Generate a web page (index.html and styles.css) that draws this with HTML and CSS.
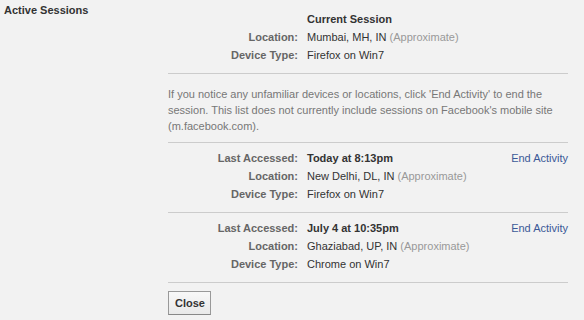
FILE: index.html
```html
<!DOCTYPE html>
<html lang="en">
<head>
  <meta charset="UTF-8" />
  <title>Active Sessions</title>
  <link rel="stylesheet" href="styles.css">
</head>
<body>
  <div class="page">
    <div class="section-title">Active Sessions</div>
    <div class="sessions">
      <div class="block current">
        <div class="row">
          <span class="label"></span>
          <span class="value strong">Current Session</span>
        </div>
        <div class="row">
          <span class="label">Location:</span>
          <span class="value">Mumbai, MH, IN <span class="muted">(Approximate)</span></span>
        </div>
        <div class="row">
          <span class="label">Device Type:</span>
          <span class="value">Firefox on Win7</span>
        </div>
      </div>
      <p class="note">
        If you notice any unfamiliar devices or locations, click 'End Activity' to end the
        session. This list does not currently include sessions on Facebook's mobile site
        (m.facebook.com).
      </p>
      <div class="block">
        <div class="row">
          <span class="label">Last Accessed:</span>
          <span class="value strong">Today at 8:13pm</span>
          <a href="#" class="end">End Activity</a>
        </div>
        <div class="row">
          <span class="label">Location:</span>
          <span class="value">New Delhi, DL, IN <span class="muted">(Approximate)</span></span>
        </div>
        <div class="row">
          <span class="label">Device Type:</span>
          <span class="value">Firefox on Win7</span>
        </div>
      </div>
      <div class="block">
        <div class="row">
          <span class="label">Last Accessed:</span>
          <span class="value strong">July 4 at 10:35pm</span>
          <a href="#" class="end">End Activity</a>
        </div>
        <div class="row">
          <span class="label">Location:</span>
          <span class="value">Ghaziabad, UP, IN <span class="muted">(Approximate)</span></span>
        </div>
        <div class="row">
          <span class="label">Device Type:</span>
          <span class="value">Chrome on Win7</span>
        </div>
      </div>
      <div class="actions">
        <button class="btn">Close</button>
      </div>
    </div>
  </div>
</body>
</html>
```

FILE: styles.css
```css
body {
  margin: 0;
  padding: 0;
  background-color: #f2f2f2;
  font-family: "Liberation Sans", Arial, sans-serif;
  font-size: 11px;
  color: #333;
}

.page {
  display: flex;
}

.section-title {
  width: 164px;
  padding: 4px 0 0 4px;
  font-weight: bold;
  color: #333;
}

.sessions {
  width: 400px;
  padding-top: 10px;
}

.block {
  padding: 6px 0 9px;
  border-bottom: 1px solid #ccc;
}

.block.current {
  padding-top: 0;
}

.row {
  display: flex;
  align-items: center;
  height: 18px;
}

.label {
  width: 130px;
  margin-right: 9px;
  text-align: right;
  font-weight: bold;
  color: #666;
}

.value {
  flex: 1;
  color: #333;
}

.strong {
  font-weight: bold;
}

.muted {
  color: #999;
}

.end {
  color: #3b5998;
  text-decoration: none;
}

.note {
  margin: 0;
  padding: 12px 0 8px;
  line-height: 16px;
  color: #777;
  border-bottom: 1px solid #ccc;
}

.actions {
  padding-top: 8px;
}

.btn {
  font-family: inherit;
  font-size: 11px;
  font-weight: bold;
  color: #333;
  background: linear-gradient(#f8f8f8, #e9e9e9);
  border: 1px solid #999;
  border-bottom-color: #888;
  padding: 0 6px;
  height: 24px;
  width: 43px;
}
```
